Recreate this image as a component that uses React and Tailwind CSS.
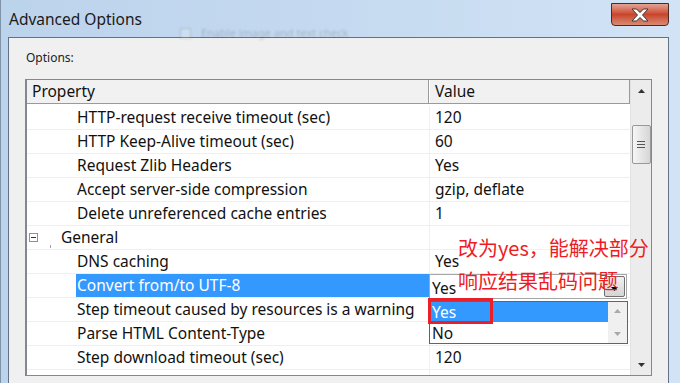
import React from 'react'

const rows = [
  { label: 'HTTP-request receive timeout (sec)', value: '120' },
  { label: 'HTTP Keep-Alive timeout (sec)', value: '60' },
  { label: 'Request Zlib Headers', value: 'Yes' },
  { label: 'Accept server-side compression', value: 'gzip, deflate' },
  { label: 'Delete unreferenced cache entries', value: '1' },
  { group: 'General' },
  { label: 'DNS caching', value: 'Yes' },
  { label: 'Convert from/to UTF-8', value: '', selected: true },
  { label: 'Step timeout caused by resources is a warning', value: '' },
  { label: 'Parse HTML Content-Type', value: '' },
  { label: 'Step download timeout (sec)', value: '120' },
  { label: '', value: '' },
]

const Row = ({ row }) => {
  if (row.group) {
    return (
      <div className="h-[24px] flex border-b border-[#efefef] shrink-0">
        <div className="w-[402px] flex items-center relative">
          <div className="ml-[2px] w-[9px] h-[9px] border border-[#919191] bg-white flex items-center justify-center">
            <div className="w-[5px] h-px bg-[#333]" />
          </div>
          <span className="ml-[23px] pt-px">{row.group}</span>
          <div className="absolute left-[23px] bottom-[1px] w-px h-[3px] bg-[#a0a0a0]" />
        </div>
        <div className="flex-1 border-l border-[#efefef]" />
      </div>
    )
  }
  return (
    <div className="h-[24px] flex border-b border-[#efefef] shrink-0">
      <div className="w-[402px] flex">
        <div
          className={
            row.selected
              ? 'ml-[49px] pl-[1px] flex-1 flex items-center bg-[#3399ff] text-white'
              : 'ml-[49px] pl-[1px] flex-1 flex items-center'
          }
        >
          <span className="whitespace-nowrap pt-px">{row.label}</span>
        </div>
      </div>
      <div className="flex-1 border-l border-[#efefef] pl-[5px] flex items-center">
        <span className="pt-px">{row.value}</span>
      </div>
    </div>
  )
}

const Arrow = ({ down, className }) => (
  <svg width="7" height="4" viewBox="0 0 7 4" className={className}>
    {down ? <path d="M0 0h7L3.5 4z" fill="currentColor" /> : <path d="M3.5 0L7 4H0z" fill="currentColor" />}
  </svg>
)

export default function App() {
  return (
    <div className="relative w-[680px] h-[383px] overflow-hidden flex flex-col bg-gradient-to-r from-[#bcd3ec] via-[#c5daf0] to-[#d2e3f5] font-['Noto_Sans',sans-serif] text-[#111]">
      {/* title bar */}
      <div className="h-[37px] flex items-start shrink-0 pr-[11px] border-l border-[#7f93a8]">
        <div className="pl-[8px] pt-[9px] text-[15.5px] leading-[20px] text-[#1a1a1a]">Advanced Options</div>
        <div className="ml-[38px] mt-[25px] flex items-center gap-[10px] opacity-20 blur-[1px]">
          <div className="w-[11px] h-[11px] border border-[#555] bg-white" />
          <span className="text-[11px] text-[#222]">Enable image and text check</span>
        </div>
        <div className="ml-auto mt-[3px] w-[58px] h-[23px] rounded-b-[4px] border border-[#4c2a24] bg-gradient-to-b from-[#e3a394] via-[#c8442b] to-[#d98a74] flex items-center justify-center">
          <svg width="20" height="14" viewBox="0 0 20 14">
            <path
              d="M2 1h4.5l3.5 3.5 3.5-3.5h4.5l-5.5 6 5.5 6h-4.5l-3.5-3.5-3.5 3.5H2l5.5-6z"
              fill="#fff"
              stroke="#3a3a3a"
              strokeWidth="1"
              strokeLinejoin="round"
            />
          </svg>
        </div>
      </div>

      {/* client */}
      <div className="flex-1 flex pl-[7px] pr-[11px] border-l border-[#7f93a8]">
        <div className="flex-1 border border-b-0 border-[#5f7288] bg-[#f0f0f0] flex flex-col px-[16px] pt-[12px]">
          <div className="text-[12px] leading-[16px] pl-px text-[#222]">Options:</div>
          <div className="mt-[13px] h-[297px] flex border border-l-2 border-[#828790] bg-white text-[15.5px] overflow-hidden">
            <div className="flex-1 flex flex-col">
              {/* header */}
              <div className="h-[24px] flex shrink-0 bg-[#f1f1f1] border-b border-r border-[#9a9a9a]">
                <div className="w-[402px] pl-[5px] flex items-center border-r border-[#9a9a9a]">
                  <span className="pt-px">Property</span>
                </div>
                <div className="flex-1 pl-[5px] flex items-center border-l border-white">
                  <span className="pt-px">Value</span>
                </div>
              </div>
              <div className="h-[2px] shrink-0" />
              {rows.map((r, i) => (
                <Row key={i} row={r} />
              ))}
            </div>
            {/* scrollbar */}
            <div className="w-[21px] shrink-0 bg-[#ececec] border-l border-[#e2e2e2] flex flex-col items-center">
              <Arrow className="mt-[9px] text-[#333]" />
              <div className="mt-[32px] w-[19px] h-[39px] rounded-[2px] border border-[#999] bg-gradient-to-r from-[#f6f6f6] to-[#d6d6d6] flex flex-col items-center justify-center gap-[2px]">
                <div className="w-[8px] h-px bg-[#555]" />
                <div className="w-[8px] h-px bg-[#555]" />
                <div className="w-[8px] h-px bg-[#555]" />
              </div>
              <Arrow down className="mt-auto mb-[8px] text-[#333]" />
            </div>
          </div>
        </div>
      </div>

      {/* combobox editor */}
      <div className="absolute left-[429px] top-[274px] w-[198px] h-[25px] border border-[#a5a5a5] bg-white flex text-[15.5px]">
        <span className="pl-[2px] pt-[2px] leading-[22px]">Yes</span>
        <div className="ml-auto mt-px mr-px w-[21px] h-[21px] border border-[#707070] rounded-[2px] bg-gradient-to-b from-[#f2f2f2] to-[#d4d4d4] flex items-center justify-center">
          <Arrow down className="mt-[4px] text-black" />
        </div>
      </div>

      {/* dropdown list */}
      <div className="absolute left-[429px] top-[301px] w-[199px] h-[43px] border border-[#646464] bg-white flex text-[15.5px]">
        <div className="flex-1 flex flex-col">
          <div className="h-[20px] bg-[#3399ff] text-white pl-[2px] leading-[20px]">Yes</div>
          <div className="h-[20px] pl-[2px] leading-[20px] mt-px">No</div>
        </div>
        <div className="w-[19px] bg-[#f0f0f0] flex flex-col items-center justify-between py-[7px]">
          <Arrow className="text-[#a8a8a8]" />
          <Arrow down className="text-[#a8a8a8]" />
        </div>
      </div>

      {/* red highlight box */}
      <div className="absolute left-[428px] top-[298px] w-[65px] h-[26px] border-[3px] border-[#e8202a]" />

      {/* annotation */}
      <div className="absolute left-[458px] top-[231px] text-[20px] leading-[33px] text-[#ee1c25] font-['Noto_Sans_CJK_SC',sans-serif]">
        <div>改为yes，能解决部分</div>
        <div>响应结果乱码问题</div>
      </div>
    </div>
  )
}
